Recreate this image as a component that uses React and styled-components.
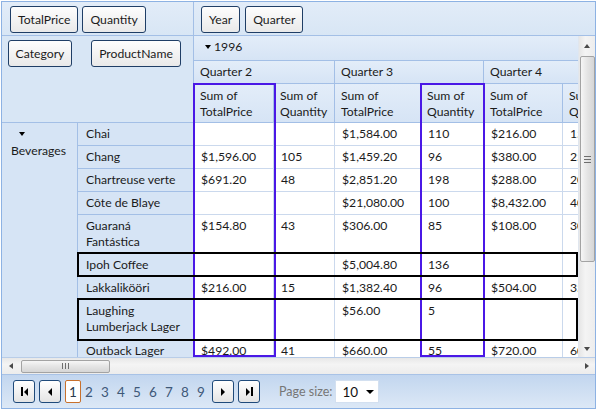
import React from "react";
import styled, { createGlobalStyle } from "styled-components";

const Global = createGlobalStyle`
  html, body { margin: 0; padding: 0; background: #ffffff; }
  body { font-family: Lato, "Open Sans", sans-serif; font-size: 12.2px; color: #1b1b1b; }
  * { box-sizing: border-box; }
`;

const LINE = "#a3bfe6";
const DATA_LINE = "#cbd9ed";

const Frame = styled.div`
  width: 595px;
  height: 408px;
  margin: 1px;
  border: 1px solid #8db2e3;
  display: flex;
  flex-direction: column;
  background: #dbe7f5;
  overflow: hidden;
`;

const TopRow = styled.div`
  height: 34px;
  flex: none;
  display: flex;
  border-bottom: 1px solid ${LINE};
  background: linear-gradient(#e2ecf8, #d8e6f5);
`;

const Zone = styled.div`
  display: flex;
  align-items: flex-start;
  padding-top: 4px;
  padding-left: ${(p) => p.$pl}px;
  gap: ${(p) => p.$gap}px;
  width: ${(p) => (p.$w ? `${p.$w}px` : "auto")};
  flex: ${(p) => (p.$w ? "none" : "1")};
  border-right: ${(p) => (p.$w ? `1px solid ${LINE}` : "none")};
`;

const FieldButton = styled.div`
  height: 27px;
  padding: 0 7px;
  display: flex;
  align-items: center;
  border: 1px solid #1f3e66;
  border-radius: 3px;
  background: linear-gradient(#fdfdfd, #e9e9e9);
  color: #1b1b1b;
  white-space: nowrap;
  font-size: 12.2px;
`;

const Body = styled.div`
  height: 321px;
  flex: none;
  display: flex;
`;

const Viewport = styled.div`
  position: relative;
  width: 576px;
  flex: none;
  overflow: hidden;
  background: #ffffff;
`;

const Grid = styled.div`
  display: grid;
  grid-template-columns: 76px 116px 80px 61px 86px 63px 79px 60px;
  grid-template-rows: 25px 23px 39px 23px 23px 23px 23px 39px 23px 23px 40px 23px;
  width: 621px;
  line-height: 16px;
`;

const RowFieldZone = styled.div`
  grid-column: 1 / span 2;
  grid-row: 1 / span 3;
  display: grid;
  grid-template-columns: 76px 116px;
  justify-items: center;
  align-items: start;
  padding-top: 4px;
  background: #d8e6f5;
  border-right: 1px solid ${LINE};
  border-bottom: 1px solid ${LINE};
`;

const HeaderCell = styled.div`
  grid-column: ${(p) => p.$col};
  grid-row: ${(p) => p.$row};
  padding: ${(p) => p.$pt}px 6px 0 ${(p) => p.$pl || 7}px;
  background: linear-gradient(#e3edf9, #d6e4f5);
  border-right: 1px solid ${LINE};
  border-bottom: 1px solid ${LINE};
  white-space: nowrap;
  overflow: hidden;
  display: flex;
  align-items: flex-start;
`;

const CategoryCell = styled.div`
  grid-column: 1;
  grid-row: 4 / span 9;
  background: #d6e4f5;
  border-right: 1px solid ${LINE};
  padding: 3px 0 0 9px;
  display: flex;
  flex-direction: column;
  align-items: flex-start;
  line-height: 18px;
`;

const CaretLine = styled.div`
  height: 16px;
  display: flex;
  align-items: center;
  padding-left: ${(p) => p.$pl}px;
`;

const Caret = styled.span`
  display: inline-block;
  width: 0;
  height: 0;
  border-left: 3.5px solid transparent;
  border-right: 3.5px solid transparent;
  border-top: 4px solid #000;
  margin-right: ${(p) => p.$mr || 0}px;
`;

const ProductCell = styled.div`
  grid-column: 2;
  background: #d6e4f5;
  border-right: 1px solid ${LINE};
  border-bottom: 1px solid ${LINE};
  padding: 3px 4px 0 8px;
  white-space: nowrap;
`;

const DataCell = styled.div`
  background: #ffffff;
  border-right: 1px solid ${DATA_LINE};
  border-bottom: 1px solid ${DATA_LINE};
  padding: 3px 2px 0 7px;
  white-space: nowrap;
  overflow: hidden;
`;

const Outline = styled.div`
  position: absolute;
  left: ${(p) => p.$x}px;
  top: ${(p) => p.$y}px;
  width: ${(p) => p.$w}px;
  height: ${(p) => p.$h}px;
  border: 2px solid ${(p) => p.$color};
  pointer-events: none;
`;

const VScroll = styled.div`
  width: 17px;
  flex: none;
  display: flex;
  flex-direction: column;
  align-items: center;
  background: linear-gradient(90deg, #e6e6e6, #f4f4f4 40%, #ededed);
  border-left: 1px solid #e0e6ee;
`;

const ArrowBox = styled.div`
  width: 17px;
  height: ${(p) => p.$h}px;
  flex: none;
  display: flex;
  align-items: center;
  justify-content: center;
`;

const TriUp = styled.span`
  width: 0; height: 0;
  border-left: 3.5px solid transparent;
  border-right: 3.5px solid transparent;
  border-bottom: 4px solid #4a4a4a;
`;
const TriDown = styled.span`
  width: 0; height: 0;
  border-left: 3.5px solid transparent;
  border-right: 3.5px solid transparent;
  border-top: 4px solid #4a4a4a;
`;
const TriLeft = styled.span`
  width: 0; height: 0;
  border-top: ${(p) => p.$s || 3.5}px solid transparent;
  border-bottom: ${(p) => p.$s || 3.5}px solid transparent;
  border-right: 4px solid ${(p) => p.$c || "#4a4a4a"};
`;
const TriRight = styled.span`
  width: 0; height: 0;
  border-top: ${(p) => p.$s || 3.5}px solid transparent;
  border-bottom: ${(p) => p.$s || 3.5}px solid transparent;
  border-left: 4px solid ${(p) => p.$c || "#4a4a4a"};
`;

const VThumb = styled.div`
  width: 15px;
  height: 206px;
  flex: none;
  border: 1px solid #a3a3a3;
  border-radius: 2px;
  background: linear-gradient(90deg, #f6f6f6, #e4e4e4 50%, #d6d6d6);
  display: flex;
  flex-direction: column;
  align-items: center;
  justify-content: center;
  gap: 2px;
`;

const GripH = styled.span`
  width: 7px;
  height: 1px;
  background: #6e6e6e;
`;

const Spacer = styled.div`
  flex: 1;
`;

const HScroll = styled.div`
  height: 17px;
  flex: none;
  display: flex;
  align-items: center;
  border-top: 1px solid #b9cde8;
  background: linear-gradient(#e8e8e8, #f4f4f4 40%, #ececec);
`;

const HThumb = styled.div`
  width: 89px;
  height: 13px;
  flex: none;
  margin-left: 2px;
  border: 1px solid #a3a3a3;
  border-radius: 2px;
  background: linear-gradient(#f6f6f6, #e4e4e4 50%, #d6d6d6);
  display: flex;
  align-items: center;
  justify-content: center;
  gap: 2px;
`;

const GripV = styled.span`
  width: 1px;
  height: 6px;
  background: #6e6e6e;
`;

const Pager = styled.div`
  height: 34px;
  flex: none;
  display: flex;
  align-items: center;
  padding-left: 11px;
  border-top: 1px solid #a8c2e6;
  background: linear-gradient(#c2d6ef, #dce8f6);
`;

const PagerButton = styled.div`
  width: 22px;
  height: 23px;
  margin-right: ${(p) => p.$mr}px;
  border: 1px solid #1f4a7a;
  border-radius: 3px;
  background: linear-gradient(#ffffff, #e4e4e4);
  display: flex;
  align-items: center;
  justify-content: center;
  gap: 1px;
`;

const Bar = styled.span`
  width: 2px;
  height: 9px;
  background: #000;
`;

const PageNum = styled.div`
  width: 16px;
  height: 23px;
  display: flex;
  align-items: center;
  justify-content: center;
  font-size: 13.5px;
  border: ${(p) => (p.$active ? "1px solid #c8712d" : "none")};
  border-radius: 2px;
  background: ${(p) => (p.$active ? "#ffffff" : "transparent")};
  color: ${(p) => (p.$active ? "#2a3a4e" : "#3e5878")};
`;

const Gap = styled.span`
  width: ${(p) => p.$w}px;
  flex: none;
`;

const PageSizeLabel = styled.span`
  margin-left: 19px;
  color: #767676;
  font-size: 12.5px;
`;

const Select = styled.div`
  margin-left: 3px;
  width: 44px;
  height: 23px;
  background: #ffffff;
  border: 1px solid #d3e0f0;
  display: flex;
  align-items: center;
  justify-content: space-between;
  padding: 0 4px 0 6px;
  font-size: 13.5px;
  color: #111;
`;

const SelectCaret = styled.span`
  width: 0; height: 0;
  border-left: 4px solid transparent;
  border-right: 4px solid transparent;
  border-top: 4px solid #000;
`;

const rows = [
  { name: ["Chai"], v: ["", "", "$1,584.00", "110", "$216.00", "15"] },
  { name: ["Chang"], v: ["$1,596.00", "105", "$1,459.20", "96", "$380.00", "25"] },
  { name: ["Chartreuse verte"], v: ["$691.20", "48", "$2,851.20", "198", "$288.00", "20"] },
  { name: ["Côte de Blaye"], v: ["", "", "$21,080.00", "100", "$8,432.00", "40"] },
  { name: ["Guaraná", "Fantástica"], v: ["$154.80", "43", "$306.00", "85", "$108.00", "30"] },
  { name: ["Ipoh Coffee"], v: ["", "", "$5,004.80", "136", "", ""] },
  { name: ["Lakkalikööri"], v: ["$216.00", "15", "$1,382.40", "96", "$504.00", "35"] },
  { name: ["Laughing", "Lumberjack Lager"], v: ["", "", "$56.00", "5", "", ""] },
  { name: ["Outback Lager"], v: ["$492.00", "41", "$660.00", "55", "$720.00", "60"] },
];

const Lines = ({ lines }) =>
  lines.map((l, i) => (
    <React.Fragment key={i}>
      {i > 0 && <br />}
      {l}
    </React.Fragment>
  ));

export default function App() {
  const cols = [
    { q: "Quarter 2", col: "3 / span 2" },
    { q: "Quarter 3", col: "5 / span 2" },
    { q: "Quarter 4", col: "7 / span 2" },
  ];
  const sumHeads = [
    ["Sum of", "TotalPrice"],
    ["Sum of", "Quantity"],
    ["Sum of", "TotalPrice"],
    ["Sum of", "Quantity"],
    ["Sum of", "TotalPrice"],
    ["Sum of", "Quantity"],
  ];
  return (
    <>
      <Global />
      <Frame>
        <TopRow>
          <Zone $w={192} $pl={8} $gap={4}>
            <FieldButton>TotalPrice</FieldButton>
            <FieldButton>Quantity</FieldButton>
          </Zone>
          <Zone $pl={7} $gap={5}>
            <FieldButton>Year</FieldButton>
            <FieldButton>Quarter</FieldButton>
          </Zone>
        </TopRow>
        <Body>
          <Viewport>
            <Grid>
              <RowFieldZone>
                <FieldButton>Category</FieldButton>
                <FieldButton>ProductName</FieldButton>
              </RowFieldZone>
              <HeaderCell $col="3 / 9" $row="1" $pt={3} $pl={11}>
                <CaretLine $pl={0}>
                  <Caret $mr={3} />
                  1996
                </CaretLine>
              </HeaderCell>
              {cols.map((c) => (
                <HeaderCell key={c.q} $col={c.col} $row="2" $pt={3} $pl={6}>
                  {c.q}
                </HeaderCell>
              ))}
              {sumHeads.map((h, i) => (
                <HeaderCell key={i} $col={`${i + 3}`} $row="3" $pt={4} $pl={6}>
                  <div>
                    <Lines lines={h} />
                  </div>
                </HeaderCell>
              ))}
              <CategoryCell>
                <CaretLine $pl={8}>
                  <Caret />
                </CaretLine>
                <span>Beverages</span>
              </CategoryCell>
              {rows.map((r, ri) => (
                <React.Fragment key={ri}>
                  <ProductCell style={{ gridRow: ri + 4 }}>
                    <Lines lines={r.name} />
                  </ProductCell>
                  {r.v.map((v, vi) => (
                    <DataCell key={vi}>{v}</DataCell>
                  ))}
                </React.Fragment>
              ))}
            </Grid>
            <Outline $color="#4a18e6" $x={191} $y={47} $w={83} $h={274} />
            <Outline $color="#4a18e6" $x={418} $y={47} $w={65} $h={274} />
            <Outline $color="#000000" $x={75} $y={216} $w={501} $h={25} />
            <Outline $color="#000000" $x={75} $y={262} $w={501} $h={43} />
          </Viewport>
          <VScroll>
            <ArrowBox $h={20}>
              <TriUp />
            </ArrowBox>
            <VThumb>
              <GripH />
              <GripH />
              <GripH />
            </VThumb>
            <Spacer />
            <ArrowBox $h={17}>
              <TriDown />
            </ArrowBox>
          </VScroll>
        </Body>
        <HScroll>
          <ArrowBox $h={15}>
            <TriLeft />
          </ArrowBox>
          <HThumb>
            <GripV />
            <GripV />
            <GripV />
          </HThumb>
          <Spacer />
          <ArrowBox $h={15}>
            <TriRight />
          </ArrowBox>
        </HScroll>
        <Pager>
          <PagerButton $mr={4}>
            <Bar />
            <TriLeft $c="#000" $s={4.5} />
          </PagerButton>
          <PagerButton $mr={4}>
            <TriLeft $c="#000" $s={4.5} />
          </PagerButton>
          {[1, 2, 3, 4, 5, 6, 7, 8, 9].map((n) => (
            <PageNum key={n} $active={n === 1}>
              {n}
            </PageNum>
          ))}
          <Gap $w={3} />
          <PagerButton $mr={4}>
            <TriRight $c="#000" $s={4.5} />
          </PagerButton>
          <PagerButton $mr={0}>
            <TriRight $c="#000" $s={4.5} />
            <Bar />
          </PagerButton>
          <PageSizeLabel>Page size:</PageSizeLabel>
          <Select>
            <span>10</span>
            <SelectCaret />
          </Select>
        </Pager>
      </Frame>
    </>
  );
}
